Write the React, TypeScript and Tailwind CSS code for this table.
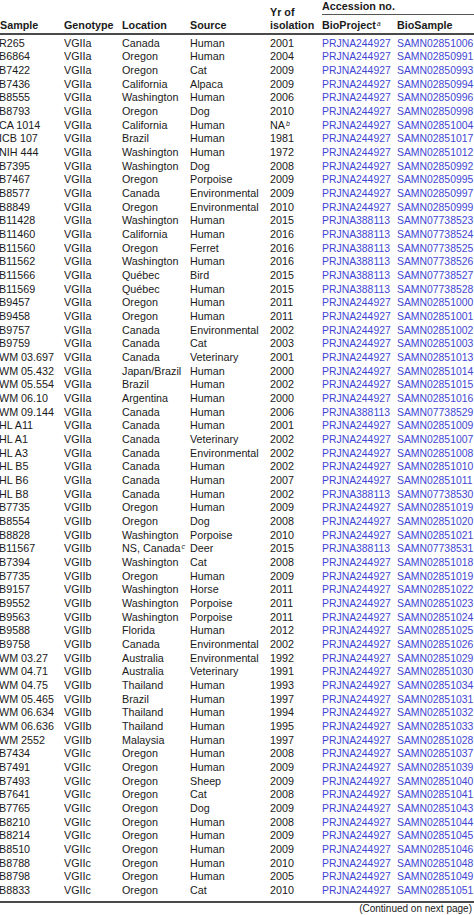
import React from "react";

type Row = [string, string, string, string, string, string, string];

const raw = `R265|VGIIa|Canada|Human|2001|PRJNA244927|SAMN02851006
B6864|VGIIa|Oregon|Human|2004|PRJNA244927|SAMN02850991
B7422|VGIIa|Oregon|Cat|2009|PRJNA244927|SAMN02850993
B7436|VGIIa|California|Alpaca|2009|PRJNA244927|SAMN02850994
B8555|VGIIa|Washington|Human|2006|PRJNA244927|SAMN02850996
B8793|VGIIa|Oregon|Dog|2010|PRJNA244927|SAMN02850998
CA 1014|VGIIa|California|Human|NA|PRJNA244927|SAMN02851004
ICB 107|VGIIa|Brazil|Human|1981|PRJNA244927|SAMN02851017
NIH 444|VGIIa|Washington|Human|1972|PRJNA244927|SAMN02851012
B7395|VGIIa|Washington|Dog|2008|PRJNA244927|SAMN02850992
B7467|VGIIa|Oregon|Porpoise|2009|PRJNA244927|SAMN02850995
B8577|VGIIa|Canada|Environmental|2009|PRJNA244927|SAMN02850997
B8849|VGIIa|Oregon|Environmental|2010|PRJNA244927|SAMN02850999
B11428|VGIIa|Washington|Human|2015|PRJNA388113|SAMN07738523
B11460|VGIIa|California|Human|2016|PRJNA388113|SAMN07738524
B11560|VGIIa|Oregon|Ferret|2016|PRJNA388113|SAMN07738525
B11562|VGIIa|Washington|Human|2016|PRJNA388113|SAMN07738526
B11566|VGIIa|Québec|Bird|2015|PRJNA388113|SAMN07738527
B11569|VGIIa|Québec|Human|2015|PRJNA388113|SAMN07738528
B9457|VGIIa|Oregon|Human|2011|PRJNA244927|SAMN02851000
B9458|VGIIa|Oregon|Human|2011|PRJNA244927|SAMN02851001
B9757|VGIIa|Canada|Environmental|2002|PRJNA244927|SAMN02851002
B9759|VGIIa|Canada|Cat|2003|PRJNA244927|SAMN02851003
WM 03.697|VGIIa|Canada|Veterinary|2001|PRJNA244927|SAMN02851013
WM 05.432|VGIIa|Japan/Brazil|Human|2000|PRJNA244927|SAMN02851014
WM 05.554|VGIIa|Brazil|Human|2002|PRJNA244927|SAMN02851015
WM 06.10|VGIIa|Argentina|Human|2000|PRJNA244927|SAMN02851016
WM 09.144|VGIIa|Canada|Human|2006|PRJNA388113|SAMN07738529
HL A11|VGIIa|Canada|Human|2001|PRJNA244927|SAMN02851009
HL A1|VGIIa|Canada|Veterinary|2002|PRJNA244927|SAMN02851007
HL A3|VGIIa|Canada|Environmental|2002|PRJNA244927|SAMN02851008
HL B5|VGIIa|Canada|Human|2002|PRJNA244927|SAMN02851010
HL B6|VGIIa|Canada|Human|2007|PRJNA244927|SAMN02851011
HL B8|VGIIa|Canada|Human|2002|PRJNA388113|SAMN07738530
B7735|VGIIb|Oregon|Human|2009|PRJNA244927|SAMN02851019
B8554|VGIIb|Oregon|Dog|2008|PRJNA244927|SAMN02851020
B8828|VGIIb|Washington|Porpoise|2010|PRJNA244927|SAMN02851021
B11567|VGIIb|NS, Canada|Deer|2015|PRJNA388113|SAMN07738531
B7394|VGIIb|Washington|Cat|2008|PRJNA244927|SAMN02851018
B7735|VGIIb|Oregon|Human|2009|PRJNA244927|SAMN02851019
B9157|VGIIb|Washington|Horse|2011|PRJNA244927|SAMN02851022
B9552|VGIIb|Washington|Porpoise|2011|PRJNA244927|SAMN02851023
B9563|VGIIb|Washington|Porpoise|2011|PRJNA244927|SAMN02851024
B9588|VGIIb|Florida|Human|2012|PRJNA244927|SAMN02851025
B9758|VGIIb|Canada|Environmental|2002|PRJNA244927|SAMN02851026
WM 03.27|VGIIb|Australia|Environmental|1992|PRJNA244927|SAMN02851029
WM 04.71|VGIIb|Australia|Veterinary|1991|PRJNA244927|SAMN02851030
WM 04.75|VGIIb|Thailand|Human|1993|PRJNA244927|SAMN02851034
WM 05.465|VGIIb|Brazil|Human|1997|PRJNA244927|SAMN02851031
WM 06.634|VGIIb|Thailand|Human|1994|PRJNA244927|SAMN02851032
WM 06.636|VGIIb|Thailand|Human|1995|PRJNA244927|SAMN02851033
WM 2552|VGIIb|Malaysia|Human|1997|PRJNA244927|SAMN02851028
B7434|VGIIc|Oregon|Human|2008|PRJNA244927|SAMN02851037
B7491|VGIIc|Oregon|Human|2009|PRJNA244927|SAMN02851039
B7493|VGIIc|Oregon|Sheep|2009|PRJNA244927|SAMN02851040
B7641|VGIIc|Oregon|Cat|2008|PRJNA244927|SAMN02851041
B7765|VGIIc|Oregon|Dog|2009|PRJNA244927|SAMN02851043
B8210|VGIIc|Oregon|Human|2008|PRJNA244927|SAMN02851044
B8214|VGIIc|Oregon|Human|2009|PRJNA244927|SAMN02851045
B8510|VGIIc|Oregon|Human|2009|PRJNA244927|SAMN02851046
B8788|VGIIc|Oregon|Human|2010|PRJNA244927|SAMN02851048
B8798|VGIIc|Oregon|Human|2005|PRJNA244927|SAMN02851049
B8833|VGIIc|Oregon|Cat|2010|PRJNA244927|SAMN02851051`;

const rows: Row[] = raw.split("\n").map((l) => l.split("|") as Row);

const cols = "grid grid-cols-[64px_58px_68px_80px_52px_75px_1fr]";

function Sup({ children }: { children: React.ReactNode }) {
  return <span className="relative -top-[3px] ml-[1px] text-[7px] italic leading-none">{children}</span>;
}

export default function App() {
  return (
    <div
      className="w-[474px] h-[915px] overflow-hidden bg-white text-[#1a1a1a] text-[10.75px] whitespace-nowrap"
      style={{ fontFamily: '"Liberation Sans", Arial, sans-serif' }}
    >
      {/* header */}
      <div className={`${cols} font-bold`}>
        <div className="col-span-4 h-[19px]" />
        <div className="h-[19px] flex items-end leading-[13px]">Yr of</div>
        <div className="col-span-2 h-[19px] pt-[1px]">
          <div className="h-[14px] border-b border-[#555] leading-[11px]">Accession no.</div>
        </div>
        <div className="leading-[13px] h-[13px]">Sample</div>
        <div className="leading-[13px] h-[13px]">Genotype</div>
        <div className="leading-[13px] h-[13px]">Location</div>
        <div className="leading-[13px] h-[13px]">Source</div>
        <div className="leading-[13px] h-[13px]">isolation</div>
        <div className="leading-[13px] h-[13px]">
          BioProject<span className="relative -top-[3px] ml-[1px] text-[7px] italic font-normal leading-none">a</span>
        </div>
        <div className="leading-[13px] h-[13px]">BioSample</div>
      </div>
      <div className="h-[2px] bg-[#4a4a4a] mt-[1px]" />
      <div className="pt-[1.5px]">
        {rows.map((r, i) => (
          <div key={i} className={`${cols} h-[13.68px] leading-[13.68px]`}>
            <div className="-ml-[1px]">{r[0]}</div>
            <div>{r[1]}</div>
            <div>
              {r[2]}
              {r[2] === "NS, Canada" && <Sup>c</Sup>}
            </div>
            <div>{r[3]}</div>
            <div>
              {r[4]}
              {r[4] === "NA" && <Sup>b</Sup>}
            </div>
            <div className="text-[#3f46d4] text-[10.4px]">{r[5]}</div>
            <div className="text-[#3f46d4] text-[10.4px]">{r[6]}</div>
          </div>
        ))}
      </div>
      <div className="h-[2px] bg-[#4a4a4a] mt-[3px]" />
      <div className="text-right leading-[11px] pr-[2px] text-[10px]">(Continued on next page)</div>
    </div>
  );
}
